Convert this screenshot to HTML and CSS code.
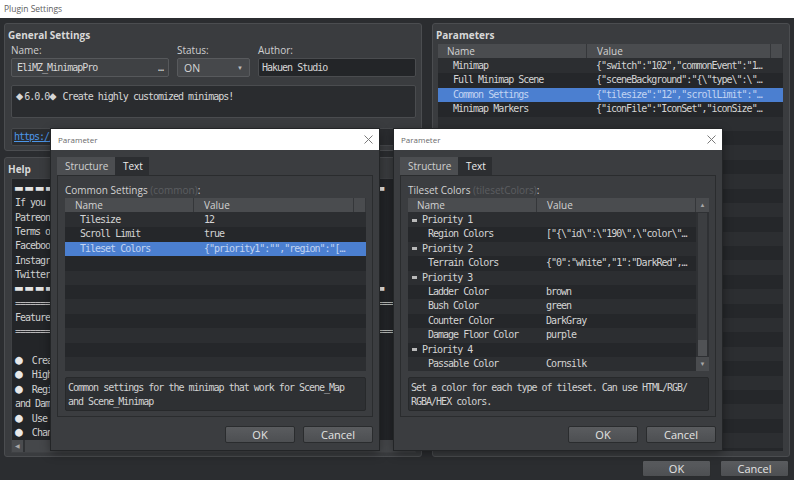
FILE: index.html
```html
<!DOCTYPE html>
<html lang="en">
<head>
    <meta charset="UTF-8">
    <title>Plugin Settings</title>
    <link rel="stylesheet" href="styles.css">
</head>
<body>
    <div class="titlebar">Plugin Settings</div>

    <div class="main">
        <div class="col-left">
            <section class="panel general">
                <h2>General Settings</h2>
                <div class="fields">
                    <div class="field">
                        <label>Name:</label>
                        <div class="box name-box"><span class="mono">EliMZ_MinimapPro</span><span class="mono dots">…</span></div>
                    </div>
                    <div class="field">
                        <label>Status:</label>
                        <div class="box status-box"><span>ON</span><span class="caret">▼</span></div>
                    </div>
                    <div class="field">
                        <label>Author:</label>
                        <div class="box author-box mono">Hakuen Studio</div>
                    </div>
                </div>
                <div class="desc-box mono"><span class="dia">◆</span>6.0.0<span class="dia">◆</span> Create highly customized minimaps!</div>
                <div class="url-box mono"><a>https://www.hakuenstudio.com/minimap-pro-for-rpg-maker</a></div>
            </section>

            <section class="panel help">
                <h2>Help</h2>
                <div class="help-box">
                    <div class="help-text mono"><span class="bar">▬▬▬▬▬▬▬▬▬▬▬▬▬▬▬▬▬▬▬▬▬▬▬▬▬▬▬▬▬▬▬▬▬▬▬▬</span>
If you like my work, please consider supporting me on Patreon!
Patreon      → https://www.patreon.com/hakuenstudio
Terms of Use → https://www.hakuenstudio.com/terms-of-use-5-0-0
Facebook     → https://www.facebook.com/hakuenstudio
Instagram    → https://www.instagram.com/hakuenstudio
Twitter      → https://twitter.com/hakuen_studio
<span class="bar">▬▬▬▬▬▬▬▬▬▬▬▬▬▬▬▬▬▬▬▬▬▬▬▬▬▬▬▬▬▬▬▬▬▬▬▬</span>
<span class="dim">============================================================================</span>
Features
<span class="dim">============================================================================</span>

<span class="bul">●</span>  Create minimaps for your maps, with a lot of customization!
<span class="bul">●</span>  Highly customizable: frame, mask, tilesize, colors and more.
<span class="bul">●</span>  Region colors, terrain tags colors, ladder, bush, counter
and Damage floor colors.
<span class="bul">●</span>  Use images instead of colors.
<span class="bul">●</span>  Change the minimap settings with plugin commands.</div>
                    <div class="hscroll"><span class="arrow-btn">◀</span><span class="hthumb"></span></div>
                </div>
            </section>
        </div>

        <section class="panel params">
            <h2>Parameters</h2>
            <div class="grid-table">
                <div class="thead"><span>Name</span><span>Value</span><span></span></div>
                <div class="tbody mono">
                    <div class="trow"><span>Minimap</span><span>{"switch":"102","commonEvent":"1…</span></div>
                    <div class="trow"><span>Full Minimap Scene</span><span>{"sceneBackground":"{\"type\":\"…</span></div>
                    <div class="trow selected"><span>Common Settings</span><span>{"tilesize":"12","scrollLimit":"…</span></div>
                    <div class="trow"><span>Minimap Markers</span><span>{"iconFile":"IconSet","iconSize"…</span></div>
                    <div class="trow"></div><div class="trow"></div><div class="trow"></div><div class="trow"></div>
                    <div class="trow"></div><div class="trow"></div><div class="trow"></div><div class="trow"></div>
                    <div class="trow"></div><div class="trow"></div><div class="trow"></div><div class="trow"></div>
                    <div class="trow"></div><div class="trow"></div><div class="trow"></div><div class="trow"></div>
                    <div class="trow"></div><div class="trow"></div><div class="trow"></div><div class="trow"></div>
                    <div class="trow"></div><div class="trow"></div><div class="trow"></div>
                </div>
            </div>
        </section>
    </div>

    <div class="footer">
        <button class="btn">OK</button>
        <button class="btn">Cancel</button>
    </div>

    <!-- left parameter window -->
    <div class="dialog d-left">
        <div class="dlg-title">
            <span>Parameter</span>
            <svg width="9" height="9" viewBox="0 0 9 9"><path d="M0.5 0.5L8.5 8.5M8.5 0.5L0.5 8.5" stroke="#7a7a7a" stroke-width="1"/></svg>
        </div>
        <div class="dlg-body">
            <div class="tabs"><span class="tab on">Structure</span><span class="tab">Text</span></div>
            <div class="tab-panel">
                <div class="struct-label">Common Settings <span class="key">(common)</span>:</div>
                <div class="grid-table dtable">
                    <div class="thead"><span>Name</span><span>Value</span><span></span></div>
                    <div class="tbody mono">
                        <div class="trow"><span>Tilesize</span><span>12</span></div>
                        <div class="trow"><span>Scroll Limit</span><span>true</span></div>
                        <div class="trow selected"><span>Tileset Colors</span><span>{"priority1":"","region":"[…</span></div>
                        <div class="trow"></div><div class="trow"></div><div class="trow"></div><div class="trow"></div>
                        <div class="trow"></div><div class="trow"></div><div class="trow"></div><div class="trow"></div>
                    </div>
                </div>
                <div class="note mono">Common settings for the minimap that work for Scene_Map<br>and Scene_Minimap</div>
            </div>
            <div class="dlg-buttons">
                <button class="btn">OK</button>
                <button class="btn">Cancel</button>
            </div>
        </div>
    </div>

    <!-- right parameter window -->
    <div class="dialog d-right">
        <div class="dlg-title">
            <span>Parameter</span>
            <svg width="9" height="9" viewBox="0 0 9 9"><path d="M0.5 0.5L8.5 8.5M8.5 0.5L0.5 8.5" stroke="#7a7a7a" stroke-width="1"/></svg>
        </div>
        <div class="dlg-body">
            <div class="tabs"><span class="tab on">Structure</span><span class="tab">Text</span></div>
            <div class="tab-panel">
                <div class="struct-label">Tileset Colors <span class="key">(tilesetColors)</span>:</div>
                <div class="tree">
                    <div class="tree-main">
                        <div class="thead"><span>Name</span><span>Value</span></div>
                        <div class="tbody mono">
                            <div class="trow group"><span><i class="toggle"></i>Priority 1</span><span></span></div>
                            <div class="trow child"><span>Region Colors</span><span>["{\"id\":\"190\",\"color\"…</span></div>
                            <div class="trow group"><span><i class="toggle"></i>Priority 2</span><span></span></div>
                            <div class="trow child"><span>Terrain Colors</span><span>{"0":"white","1":"DarkRed",…</span></div>
                            <div class="trow group"><span><i class="toggle"></i>Priority 3</span><span></span></div>
                            <div class="trow child"><span>Ladder Color</span><span>brown</span></div>
                            <div class="trow child"><span>Bush Color</span><span>green</span></div>
                            <div class="trow child"><span>Counter Color</span><span>DarkGray</span></div>
                            <div class="trow child"><span>Damage Floor Color</span><span>purple</span></div>
                            <div class="trow group"><span><i class="toggle"></i>Priority 4</span><span></span></div>
                            <div class="trow child"><span>Passable Color</span><span>Cornsilk</span></div>
                        </div>
                    </div>
                    <div class="vscroll">
                        <span class="arrow-btn">▲</span>
                        <span class="vthumb"></span>
                        <span class="vtail"></span>
                        <span class="arrow-btn">▼</span>
                    </div>
                </div>
                <div class="note mono">Set a color for each type of tileset. Can use HTML/RGB/<br>RGBA/HEX colors.</div>
            </div>
            <div class="dlg-buttons">
                <button class="btn">OK</button>
                <button class="btn">Cancel</button>
            </div>
        </div>
    </div>
</body>
</html>
```

FILE: styles.css
```css
* {
    margin: 0;
    padding: 0;
    box-sizing: border-box;
}

html, body {
    width: 794px;
    height: 480px;
    overflow: hidden;
}

body {
    position: relative;
    background: #2b2d30;
    font-family: "Open Sans", "Noto Sans", sans-serif;
    font-size: 10px;
    color: #d6d6d6;
}

.mono {
    font-family: "DejaVu Sans Mono", monospace;
    font-size: 10px;
    letter-spacing: -1px;
}

.titlebar {
    height: 18px;
    background: #ffffff;
    color: #606060;
    font-size: 8.5px;
    line-height: 18px;
    padding-left: 4px;
}

/* main window */
.main {
    display: grid;
    grid-template-columns: 418px 358px;
    column-gap: 10px;
    height: 434px;
    padding: 5px 4px 0;
}

.col-left {
    display: flex;
    flex-direction: column;
    gap: 6px;
}

.panel {
    background: #3a3c3f;
    border: 1px solid #4b4d50;
    border-radius: 3px;
    padding: 4px 5px 4px 6px;
}

.panel h2 {
    font-size: 10px;
    font-weight: 700;
    line-height: 14px;
    color: #d8d8d8;
    margin-left: -3px;
}

.general {
    height: 128px;
}

.fields {
    display: grid;
    grid-template-columns: 158px 73px 1fr;
    column-gap: 8px;
    margin-top: 2px;
}

.field label {
    display: block;
    line-height: 13px;
    color: #cfcfcf;
}

.box {
    height: 19px;
    margin-top: 1px;
    border-radius: 2px;
    display: flex;
    align-items: center;
    justify-content: space-between;
}

.name-box {
    background: #3f4144;
    border: 1px solid #56585b;
    padding: 0 5px 0 5px;
}

.status-box {
    background: #46484b;
    border: 1px solid #585a5d;
    padding: 0 6px 0 6px;
    font-size: 10.5px;
}

.caret {
    font-size: 6px;
    color: #bdbdbd;
}

.author-box {
    background: #232528;
    border: 1px solid #4a4c4f;
    padding-left: 3px;
}

.desc-box {
    height: 33px;
    margin-top: 8px;
    background: #2a2c2f;
    border: 1px solid #4a4c4f;
    border-radius: 2px;
    padding: 4px 4px;
    line-height: 14px;
}

.desc-box .dia {
    font-size: 12px;
    line-height: 0;
    letter-spacing: 1px;
}

.url-box {
    height: 18px;
    margin-top: 10px;
    background: #2a2c2f;
    border: 1px solid #46484b;
    border-radius: 2px;
    padding: 1px 2px;
    line-height: 14px;
    white-space: nowrap;
    overflow: hidden;
}

.url-box a {
    color: #4c96e8;
    text-decoration: underline;
}

.help {
    flex: 1;
    display: flex;
    flex-direction: column;
    padding-bottom: 3px;
}

.help-box {
    flex: 1;
    margin-top: 2px;
    background: #232528;
    border: 1px solid #3f4144;
    display: flex;
    flex-direction: column;
    overflow: hidden;
}

.help-text {
    flex: 1;
    white-space: pre;
    overflow: hidden;
    line-height: 14.35px;
    padding: 3px 0 0 3px;
    color: #d2d2d2;
}

.help-text .bar {
    font-size: 13px;
    line-height: 0;
    letter-spacing: 2.5px;
    color: #e4e4e4;
}

.help-text .dim {
    color: #b8b8b8;
}

.help-text .bul {
    font-size: 13px;
    line-height: 0;
    color: #e8e8e8;
}

.hscroll {
    height: 12px;
    flex: none;
    display: flex;
    background: #2f3134;
}

.arrow-btn {
    display: flex;
    align-items: center;
    justify-content: center;
    background: #4a4c4f;
    color: #a8a8a8;
    font-size: 6px;
}

.hscroll .arrow-btn {
    width: 11px;
}

.hthumb {
    flex: 1;
    margin-left: 2px;
    background: #45474a;
}

/* tables */
.params {
    display: flex;
    flex-direction: column;
    padding: 4px 6px 5px 5px;
}

.params h2 {
    margin-left: -2px;
}

.grid-table {
    flex: 1;
    margin-top: 2px;
    background: #25272a;
    display: flex;
    flex-direction: column;
    overflow: hidden;
}

.thead {
    display: grid;
    height: 15px;
    flex: none;
    background: #4a4c4f;
    border-bottom: 1px solid #2c2e31;
}

.thead span {
    line-height: 14px;
    color: #d2d2d2;
    border-right: 1px solid #35373a;
    white-space: nowrap;
}

.tbody {
    flex: 1;
    overflow: hidden;
}

.trow {
    display: grid;
    height: 14.4px;
    line-height: 14.4px;
    white-space: nowrap;
    color: #d4d4d4;
}

.trow span {
    overflow: hidden;
}

.trow:nth-child(odd) {
    background: #2c2e31;
}

.trow.selected {
    background: #4b7fd0;
    color: #c2d4f2;
}

.params .thead, .params .trow {
    grid-template-columns: 149px 184px 1fr;
}

.params .thead span:first-child {
    padding-left: 9px;
}

.params .thead span:nth-child(2) {
    padding-left: 10px;
}

.params .trow span:first-child {
    padding-left: 15px;
}

.params .trow span:nth-child(2) {
    padding-left: 9px;
}

.footer {
    display: flex;
    justify-content: flex-end;
    gap: 9px;
    padding: 8px 5px 0 0;
}

.btn {
    width: 69px;
    height: 17px;
    border: 1px solid #2a2c2e;
    border-radius: 2px;
    background: linear-gradient(#5a5c5f, #4d4f52);
    color: #e4e4e4;
    font-family: "Open Sans", "Noto Sans", sans-serif;
    font-size: 11px;
    line-height: 15px;
}

/* parameter windows */
.dialog {
    position: absolute;
    top: 129px;
    width: 328px;
    height: 321px;
    background: #3b3d40;
    box-shadow: 0 0 0 1px #232527, 0 3px 10px rgba(0, 0, 0, 0.45);
    display: flex;
    flex-direction: column;
}

.d-left {
    left: 51px;
}

.d-right {
    left: 394px;
}

.dlg-title {
    height: 21px;
    flex: none;
    background: #ffffff;
    color: #6a6a6a;
    font-size: 8px;
    display: flex;
    align-items: center;
    justify-content: space-between;
    padding: 0 6px 0 7px;
}

.dlg-body {
    flex: 1;
    display: flex;
    flex-direction: column;
    padding: 7px 6px 7px;
}

.tabs {
    display: flex;
    height: 18px;
}

.tab {
    padding-left: 8px;
    line-height: 18px;
    background: #2c2e31;
    color: #ececec;
    width: 34px;
}

.tab.on {
    width: 58px;
    background: #4c4e51;
    color: #d0d0d0;
}

.tab-panel {
    height: 242px;
    border: 1px solid #2a2c2e;
    padding: 7px 6px 5px 7px;
    display: flex;
    flex-direction: column;
}

.struct-label {
    line-height: 14px;
    color: #d2d2d2;
}

.struct-label .key {
    color: #5c5e61;
}

.dtable {
    flex: none;
    height: 173px;
    margin-top: 1px;
}

.dtable .thead, .dtable .trow {
    grid-template-columns: 129px 160px 1fr;
}

.dtable .thead span:first-child,
.dtable .thead span:nth-child(2) {
    padding-left: 10px;
}

.dtable .trow span:first-child {
    padding-left: 15px;
}

.dtable .trow span:nth-child(2) {
    padding-left: 10px;
}

.tree {
    height: 173px;
    margin-top: 1px;
    display: flex;
    background: #25272a;
}

.tree-main {
    flex: 1;
    display: flex;
    flex-direction: column;
    overflow: hidden;
}

.tree-main .thead, .tree-main .trow {
    grid-template-columns: 129px 1fr;
}

.tree-main .thead span:first-child {
    padding-left: 9px;
}

.tree-main .thead span:nth-child(2) {
    padding-left: 10px;
}

.tree-main .trow span:nth-child(2) {
    padding-left: 9px;
}

.trow.group span:first-child {
    padding-left: 4px;
    display: flex;
    align-items: center;
}

.trow.child span:first-child {
    padding-left: 20px;
}

.toggle {
    width: 5px;
    height: 3px;
    background: #b9b9b9;
    margin-right: 5px;
}

.vscroll {
    width: 13px;
    display: flex;
    flex-direction: column;
    background: #2f3134;
}

.vscroll .arrow-btn {
    height: 14px;
    flex: none;
}

.vthumb {
    flex: 1;
    margin: 1px 2px 0;
    background: #3c3e41;
}

.vtail {
    height: 16px;
    margin: 0 2px 1px;
    background: #505255;
}

.note {
    height: 34px;
    margin-top: 6px;
    background: #2e3033;
    border: 1px solid #27292b;
    border-radius: 2px;
    padding: 3px 2px;
    line-height: 13.5px;
    color: #d2d2d2;
}

.dlg-buttons {
    margin-top: 9px;
    display: flex;
    justify-content: flex-end;
    gap: 8px;
}

.dlg-buttons .btn {
    width: 70px;
}
```
